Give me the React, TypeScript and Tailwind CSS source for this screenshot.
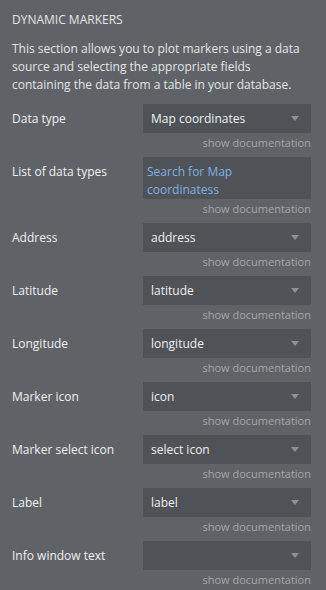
const fields: { label: string; value?: string; search?: string }[] = [
  { label: 'Data type', value: 'Map coordinates' },
  { label: 'List of data types', search: 'Search for Map coordinatess' },
  { label: 'Address', value: 'address' },
  { label: 'Latitude', value: 'latitude' },
  { label: 'Longitude', value: 'longitude' },
  { label: 'Marker icon', value: 'icon' },
  { label: 'Marker select icon', value: 'select icon' },
  { label: 'Label', value: 'label' },
  { label: 'Info window text', value: '' },
];

function Arrow() {
  return (
    <svg width="8" height="5" viewBox="0 0 8 5" className="shrink-0">
      <path d="M0 0 L8 0 L4 5 Z" fill="#8d9194" />
    </svg>
  );
}

export default function App() {
  return (
    <div
      className="w-[326px] h-[590px] bg-[#5f6367] overflow-hidden pl-3 pr-[15px] pt-[11px]"
      style={{ fontFamily: '"Open Sans", sans-serif' }}
    >
      <div className="text-[12px] leading-[18px] text-[#e3e5e6] uppercase">Dynamic Markers</div>
      <p className="mt-[11px] text-[12px] leading-[18px] text-[#e3e5e6]">
        This section allows you to plot markers using a data source and selecting the appropriate fields containing the data from a table in your database.
      </p>
      <div className="mt-[10px] flex flex-col">
        {fields.map(f => (
          <div key={f.label} className="flex flex-col mb-[6px]">
            <div className="flex">
              <div className="w-[131px] shrink-0 text-[12px] leading-[18px] text-[#eef0f1] pt-[6px]">{f.label}</div>
              {f.search ? (
                <div className="flex-1 bg-[#4f5357] h-[42px] px-[4px] pt-[6px] text-[12px] leading-[18px] text-[#7fb0e6]">
                  {f.search}
                </div>
              ) : (
                <div className="flex-1 bg-[#4f5357] h-[29px] flex items-center pl-[8px] pr-[12px]">
                  <span className="flex-1 text-[12px] text-[#eef0f1]">{f.value}</span>
                  <Arrow />
                </div>
              )}
            </div>
            <div className="text-right text-[11px] leading-[17px] text-[#a3a7aa] mt-[1px]">show documentation</div>
          </div>
        ))}
      </div>
    </div>
  );
}
